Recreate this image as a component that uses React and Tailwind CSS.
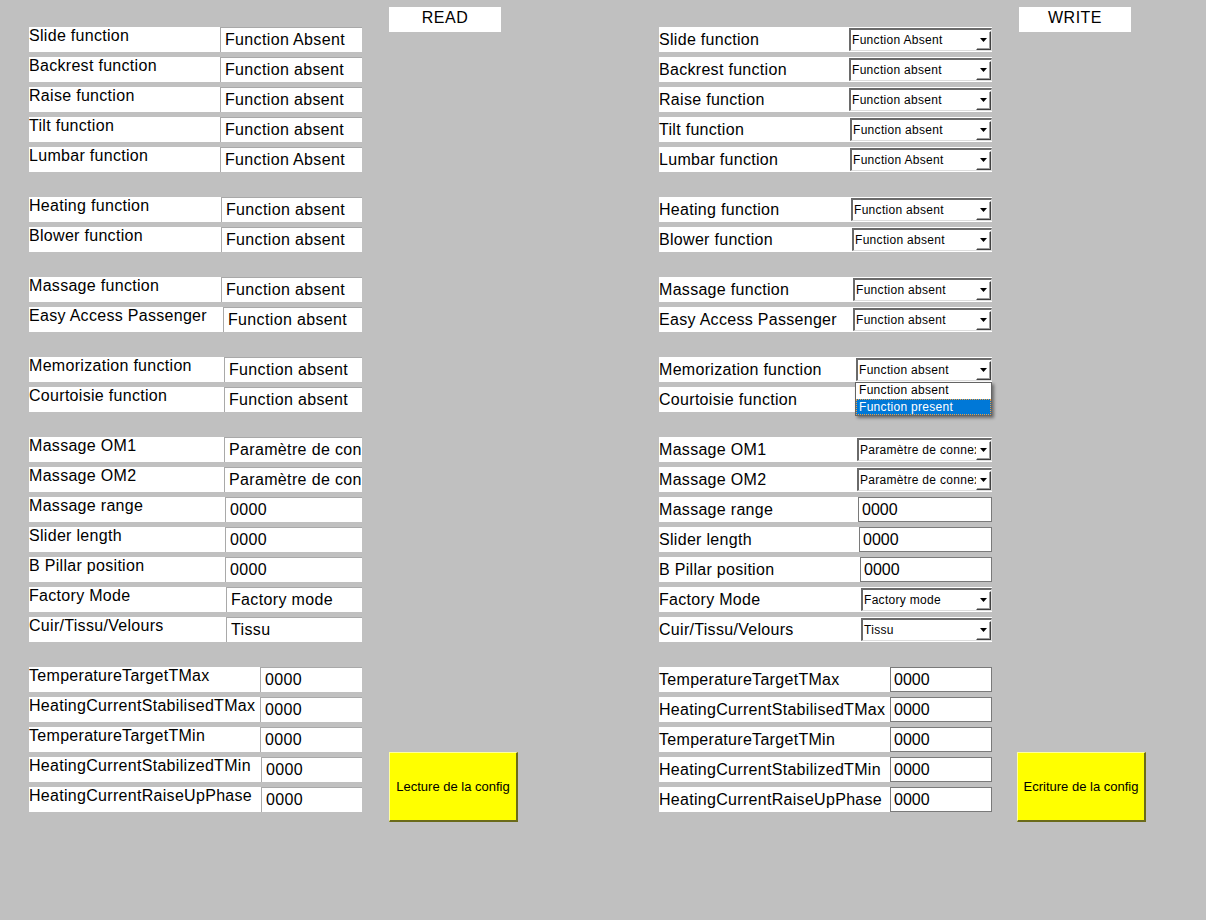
import React from 'react';

// left side: read-only values, label width sets where the value box starts
const readGroups = [
  [
    { label: 'Slide function', value: 'Function Absent', w: 'w-[191px]' },
    { label: 'Backrest function', value: 'Function absent', w: 'w-[191px]' },
    { label: 'Raise function', value: 'Function absent', w: 'w-[191px]' },
    { label: 'Tilt function', value: 'Function absent', w: 'w-[191px]' },
    { label: 'Lumbar function', value: 'Function Absent', w: 'w-[191px]' },
  ],
  [
    { label: 'Heating function', value: 'Function absent', w: 'w-[192px]' },
    { label: 'Blower function', value: 'Function absent', w: 'w-[192px]' },
  ],
  [
    { label: 'Massage function', value: 'Function absent', w: 'w-[192px]' },
    { label: 'Easy Access Passenger', value: 'Function absent', w: 'w-[194px]' },
  ],
  [
    { label: 'Memorization function', value: 'Function absent', w: 'w-[195px]' },
    { label: 'Courtoisie function', value: 'Function absent', w: 'w-[195px]' },
  ],
  [
    { label: 'Massage OM1', value: 'Paramètre de connexion', w: 'w-[195px]' },
    { label: 'Massage OM2', value: 'Paramètre de connexion', w: 'w-[195px]' },
    { label: 'Massage range', value: '0000', w: 'w-[196px]' },
    { label: 'Slider length', value: '0000', w: 'w-[196px]' },
    { label: 'B Pillar position', value: '0000', w: 'w-[196px]' },
    { label: 'Factory Mode', value: 'Factory mode', w: 'w-[197px]' },
    { label: 'Cuir/Tissu/Velours', value: 'Tissu', w: 'w-[197px]' },
  ],
  [
    { label: 'TemperatureTargetTMax', value: '0000', w: 'w-[231px]' },
    { label: 'HeatingCurrentStabilisedTMax', value: '0000', w: 'w-[231px]' },
    { label: 'TemperatureTargetTMin', value: '0000', w: 'w-[231px]' },
    { label: 'HeatingCurrentStabilizedTMin', value: '0000', w: 'w-[232px]' },
    { label: 'HeatingCurrentRaiseUpPhase', value: '0000', w: 'w-[232px]' },
  ],
];

// right side: editable controls
const writeGroups = [
  [
    { label: 'Slide function', value: 'Function Absent', w: 'w-[190px]', type: 'select' },
    { label: 'Backrest function', value: 'Function absent', w: 'w-[190px]', type: 'select' },
    { label: 'Raise function', value: 'Function absent', w: 'w-[190px]', type: 'select' },
    { label: 'Tilt function', value: 'Function absent', w: 'w-[191px]', type: 'select' },
    { label: 'Lumbar function', value: 'Function Absent', w: 'w-[191px]', type: 'select' },
  ],
  [
    { label: 'Heating function', value: 'Function absent', w: 'w-[192px]', type: 'select' },
    { label: 'Blower function', value: 'Function absent', w: 'w-[193px]', type: 'select' },
  ],
  [
    { label: 'Massage function', value: 'Function absent', w: 'w-[194px]', type: 'select' },
    { label: 'Easy Access Passenger', value: 'Function absent', w: 'w-[194px]', type: 'select' },
  ],
  [
    { label: 'Memorization function', value: 'Function absent', w: 'w-[197px]', type: 'select', open: true },
    // covered by the open list above
    { label: 'Courtoisie function', value: '', w: 'w-[197px]', type: 'select' },
  ],
  [
    { label: 'Massage OM1', value: 'Paramètre de connexion', w: 'w-[198px]', type: 'select' },
    { label: 'Massage OM2', value: 'Paramètre de connexion', w: 'w-[198px]', type: 'select' },
    { label: 'Massage range', value: '0000', w: 'w-[199px]', type: 'input' },
    { label: 'Slider length', value: '0000', w: 'w-[200px]', type: 'input' },
    { label: 'B Pillar position', value: '0000', w: 'w-[201px]', type: 'input' },
    { label: 'Factory Mode', value: 'Factory mode', w: 'w-[202px]', type: 'select' },
    { label: 'Cuir/Tissu/Velours', value: 'Tissu', w: 'w-[202px]', type: 'select' },
  ],
  [
    { label: 'TemperatureTargetTMax', value: '0000', w: 'w-[231px]', type: 'input' },
    { label: 'HeatingCurrentStabilisedTMax', value: '0000', w: 'w-[231px]', type: 'input' },
    { label: 'TemperatureTargetTMin', value: '0000', w: 'w-[231px]', type: 'input' },
    { label: 'HeatingCurrentStabilizedTMin', value: '0000', w: 'w-[231px]', type: 'input' },
    { label: 'HeatingCurrentRaiseUpPhase', value: '0000', w: 'w-[231px]', type: 'input' },
  ],
];

function ReadRow({ label, value, w }) {
  return (
    <div className="flex h-[25px] w-[333px] bg-white">
      <div className={`${w} shrink-0 whitespace-nowrap text-[16px] leading-[18px] tracking-[0.3px]`}>{label}</div>
      <div className="min-w-0 flex-1 overflow-hidden whitespace-nowrap border-l border-t border-[#a9a9a9] pl-[4px] pt-[3px] text-[16px] leading-[18px] tracking-[0.35px]">
        {value}
      </div>
    </div>
  );
}

function Arrow() {
  return (
    <div className="flex h-[19px] w-[15px] shrink-0 items-center justify-center border-l border-t border-r border-b border-l-white border-t-white border-r-[#404040] border-b-[#404040] bg-white shadow-[inset_-1px_-1px_0_#a0a0a0]">
      <svg width="7" height="4" viewBox="0 0 7 4">
        <polygon points="0,0 7,0 3.5,4" fill="#000" />
      </svg>
    </div>
  );
}

function Select({ value, open }) {
  return (
    <div className="relative my-auto flex h-[23px] min-w-0 flex-1 items-center border-l-2 border-t-2 border-b border-r border-l-[#6a6a6a] border-t-[#6a6a6a] border-b-[#dcdcdc] border-r-[#dcdcdc] bg-white">
      <div className="min-w-0 flex-1 overflow-hidden whitespace-nowrap pl-[1px] text-[12px] leading-[14px] tracking-[0.3px]">{value}</div>
      <Arrow />
      {open && (
        <div className="absolute left-[-3px] top-[22px] z-10 w-[137px] border border-[#646464] bg-white text-[12px] leading-[15px] tracking-[0.3px] shadow-[2px_2px_3px_rgba(0,0,0,0.45)]">
          <div className="h-[16px] pl-[3px]">Function absent</div>
          <div className="h-[16px] border border-dotted border-[#f0a040] bg-[#0078d7] pl-[2px] text-white">Function present</div>
        </div>
      )}
    </div>
  );
}

function WriteRow({ label, value, w, type, open }) {
  return (
    <div className="flex h-[25px] w-[333px] bg-white">
      <div className={`${w} shrink-0 self-center whitespace-nowrap text-[16px] leading-[18px] tracking-[0.3px]`}>{label}</div>
      {type === 'select' ? (
        <Select value={value} open={open} />
      ) : (
        <div className="flex min-w-0 flex-1 items-center overflow-hidden whitespace-nowrap border border-[#7a7a7a] pl-[3px] text-[16px] leading-[18px]">
          {value}
        </div>
      )}
    </div>
  );
}

function Rows({ groups, Row }) {
  return (
    <div className="flex flex-col gap-[25px] pt-[20px]">
      {groups.map((g, i) => (
        <div key={i} className="flex flex-col gap-[5px]">
          {g.map((r) => (
            <Row key={r.label} {...r} />
          ))}
        </div>
      ))}
    </div>
  );
}

function ConfigButton({ children, className }) {
  return (
    <button className={`flex h-[70px] w-[129px] items-center justify-center border-l border-t border-r-2 border-b-2 border-l-[#ffff9a] border-t-[#ffff9a] border-r-[#6b6b1a] border-b-[#6b6b1a] bg-[#ffff00] text-[13px] ${className}`}>
      {children}
    </button>
  );
}

export default function App() {
  return (
    <div
      className="h-[920px] w-full bg-[#c0c0c0] text-black"
      style={{ fontFamily: "'Liberation Sans', Arial, sans-serif" }}
    >
      <div className="flex pl-[29px] pt-[7px]">
        {/* LECTURE (GAUCHE) */}
        <div className="flex gap-[27px]">
          <Rows groups={readGroups} Row={ReadRow} />
          <div className="flex flex-col">
            <div className="flex h-[25px] w-[112px] items-center justify-center bg-white pb-[4px] text-[16px] tracking-[0.5px]">READ</div>
            <ConfigButton className="mt-[720px]">Lecture de la config</ConfigButton>
          </div>
        </div>

        {/* ECRITURE (DROITE) */}
        <div className="ml-[141px] flex gap-[27px]">
          <Rows groups={writeGroups} Row={WriteRow} />
          <div className="flex flex-col">
            <div className="flex h-[25px] w-[112px] items-center justify-center bg-white pb-[4px] text-[16px] tracking-[0.5px]">WRITE</div>
            <ConfigButton className="-ml-[2px] mt-[720px]">Ecriture de la config</ConfigButton>
          </div>
        </div>
      </div>
    </div>
  );
}
